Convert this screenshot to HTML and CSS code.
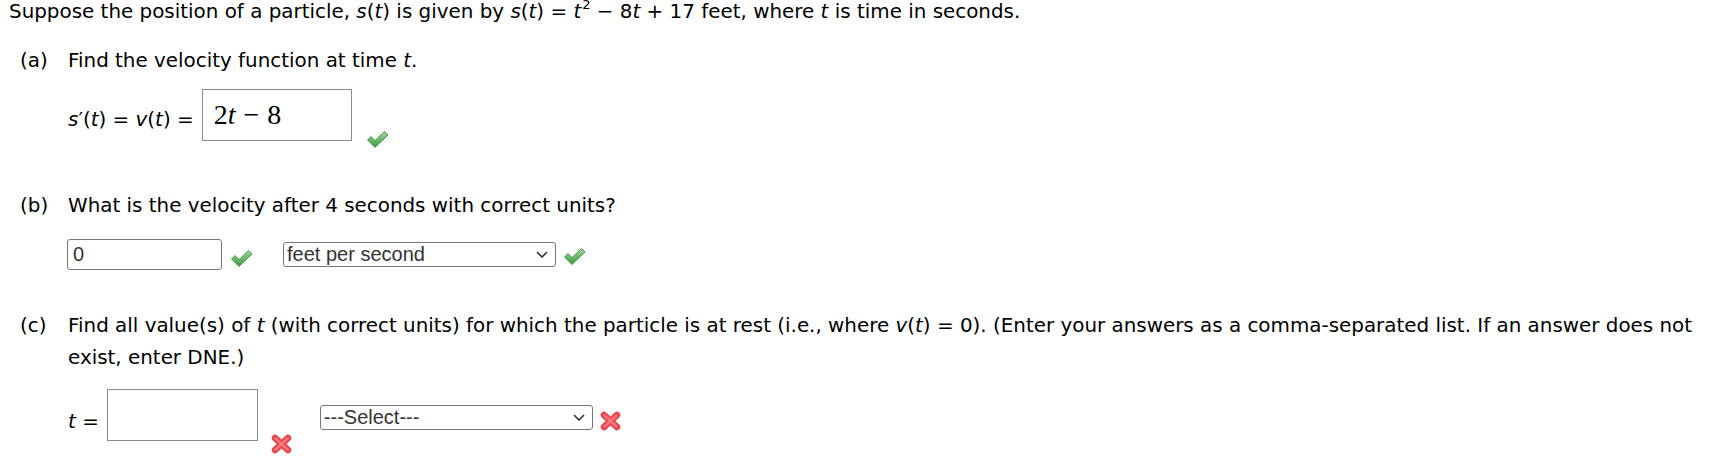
FILE: index.html
```html
<!DOCTYPE html>
<html lang="en">
<head>
<meta charset="utf-8">
<title>Particle velocity</title>
<link rel="stylesheet" href="styles.css">
</head>
<body>
<div class="question">
  <p class="intro">Suppose the position of a particle, <i>s</i>(<i>t</i>) is given by <i>s</i>(<i>t</i>) = <i>t</i><sup>2</sup> &minus; 8<i>t</i> + 17 feet, where <i>t</i> is time in seconds.</p>

  <div class="part part-a">
    <span class="label">(a)</span>
    <div class="body">
      <p class="prompt">Find the velocity function at time <i>t</i>.</p>
      <div class="row row-a">
        <span class="eq"><i>s</i>&prime;(<i>t</i>) = <i>v</i>(<i>t</i>) =</span>
        <span class="mathbox"><span class="math">2<i>t</i><span class="op">&minus;</span>8</span></span>
        <svg class="icon check check-a" viewBox="0 0 23 19" width="23" height="19" aria-label="correct">
          <defs>
            <linearGradient id="g1" x1="0" y1="0" x2="0" y2="1">
              <stop offset="0" stop-color="#9ad89a"/>
              <stop offset="1" stop-color="#3f9a3f"/>
            </linearGradient>
          </defs>
          <path d="M1.5 10 L5 6.5 L9 10.5 L18.5 1.5 L22 5 L9 17.5 Z" fill="url(#g1)" stroke="#4c9a4c" stroke-width="1" stroke-linejoin="round"/>
        </svg>
      </div>
    </div>
  </div>

  <div class="part part-b">
    <span class="label">(b)</span>
    <div class="body">
      <p class="prompt">What is the velocity after 4 seconds with correct units?</p>
      <div class="row row-b">
        <input class="field" type="text" value="0">
        <svg class="icon check check-b1" viewBox="0 0 23 19" width="23" height="19" aria-label="correct">
          <defs>
            <linearGradient id="g2" x1="0" y1="0" x2="0" y2="1">
              <stop offset="0" stop-color="#9ad89a"/>
              <stop offset="1" stop-color="#3f9a3f"/>
            </linearGradient>
          </defs>
          <path d="M1.5 10 L5 6.5 L9 10.5 L18.5 1.5 L22 5 L9 17.5 Z" fill="url(#g2)" stroke="#4c9a4c" stroke-width="1" stroke-linejoin="round"/>
        </svg>
        <span class="select-wrap units-b">
          <select class="units">
            <option>feet per second</option>
          </select>
          <svg class="chevron" viewBox="0 0 12 7" width="12" height="7" aria-hidden="true"><path d="M1 1 L6 6 L11 1" fill="none" stroke="#333" stroke-width="1.6"/></svg>
        </span>
        <svg class="icon check check-b2" viewBox="0 0 23 19" width="23" height="19" aria-label="correct">
          <defs>
            <linearGradient id="g3" x1="0" y1="0" x2="0" y2="1">
              <stop offset="0" stop-color="#9ad89a"/>
              <stop offset="1" stop-color="#3f9a3f"/>
            </linearGradient>
          </defs>
          <path d="M1.5 10 L5 6.5 L9 10.5 L18.5 1.5 L22 5 L9 17.5 Z" fill="url(#g3)" stroke="#4c9a4c" stroke-width="1" stroke-linejoin="round"/>
        </svg>
      </div>
    </div>
  </div>

  <div class="part part-c">
    <span class="label">(c)</span>
    <div class="body">
      <p class="prompt"><span>Find all value(s) of <i>t</i> (with correct units) for which the particle is at rest (i.e., where <i>v</i>(<i>t</i>) = 0).</span> <span>(Enter your answers as a comma-separated list.</span> <span>If an answer does not</span> <span>exist, enter DNE.)</span></p>
      <div class="row row-c">
        <span class="eq eq-c"><i>t</i> =</span>
        <span class="mathbox empty"></span>
        <svg class="icon cross cross-1" viewBox="0 0 21 20" width="21" height="20" aria-label="incorrect">
          <g stroke-linecap="round">
            <path d="M4 4 L17 16 M17 4 L4 16" stroke="#e9444e" stroke-width="6.5"/>
            <path d="M4.5 4.5 L16.5 15.5 M16.5 4.5 L4.5 15.5" stroke="#f7767c" stroke-width="2.5"/>
          </g>
        </svg>
        <span class="select-wrap units-c">
          <select class="units">
            <option>---Select---</option>
          </select>
          <svg class="chevron" viewBox="0 0 12 7" width="12" height="7" aria-hidden="true"><path d="M1 1 L6 6 L11 1" fill="none" stroke="#333" stroke-width="1.6"/></svg>
        </span>
        <svg class="icon cross cross-2" viewBox="0 0 21 20" width="21" height="20" aria-label="incorrect">
          <g stroke-linecap="round">
            <path d="M4 4 L17 16 M17 4 L4 16" stroke="#e9444e" stroke-width="6.5"/>
            <path d="M4.5 4.5 L16.5 15.5 M16.5 4.5 L4.5 15.5" stroke="#f7767c" stroke-width="2.5"/>
          </g>
        </svg>
      </div>
    </div>
  </div>
</div>
</body>
</html>
```

FILE: styles.css
```css
html, body {
  margin: 0;
  padding: 0;
  background: #ffffff;
}

body {
  font-family: "DejaVu Sans", Verdana, sans-serif;
  font-size: 19.9px;
  color: #000000;
}

.question {
  padding: 0 10px 0 9px;
}

p {
  margin: 0;
}

.intro {
  line-height: 24px;
}

.intro sup {
  font-size: 13px;
  line-height: 0;
  vertical-align: 9px;
  margin-left: 1px;
}

.part {
  display: grid;
  grid-template-columns: 59px 1fr;
  line-height: 32px;
}

.label {
  padding-left: 11px;
}

.part-a {
  margin-top: 21px;
}

.part-b {
  margin-top: 41px;
}

.part-c {
  margin-top: 40px;
}

.row {
  display: flex;
  align-items: flex-start;
  line-height: normal;
}

.row-a {
  margin-top: 12px;
}

.eq {
  align-self: center;
  white-space: nowrap;
}

.mathbox {
  box-sizing: border-box;
  display: flex;
  align-items: center;
  width: 150px;
  height: 52px;
  margin-left: 8px;
  padding-left: 11px;
  border: 1px solid #8c8c8c;
  background: #fff;
}

.math {
  font-family: "Liberation Serif", "DejaVu Serif", serif;
  font-size: 28px;
  white-space: nowrap;
}

.math .op {
  margin: 0 8px;
}

.icon {
  flex: none;
  display: block;
}

.check-a {
  margin-left: 14px;
  margin-top: 41px;
}

.row-b {
  margin-top: 17px;
  align-items: center;
}

.field {
  box-sizing: border-box;
  width: 155px;
  height: 31px;
  margin: 0 0 0 -1px;
  padding: 0 5px;
  border: 1px solid #767676;
  border-radius: 3px;
  font-family: "Liberation Sans", Arial, sans-serif;
  font-size: 20px;
  color: #333;
  background: #fff;
}

.check-b1 {
  margin-left: 8px;
  margin-top: 7px;
}

.select-wrap {
  position: relative;
  display: block;
  flex: none;
}

.units {
  display: block;
  box-sizing: border-box;
  width: 273px;
  height: 25px;
  margin: 0;
  padding: 0 0 0 3px;
  border: 1px solid #767676;
  border-radius: 3px;
  font-family: "Liberation Sans", Arial, sans-serif;
  font-size: 20px;
  line-height: 23px;
  color: #333;
  background-color: #fff;
  appearance: none;
  -webkit-appearance: none;
}

.chevron {
  position: absolute;
  right: 8px;
  top: 9px;
  pointer-events: none;
}

.units-b {
  margin-left: 30px;
}

.check-b2 {
  margin-left: 7px;
  margin-top: 4px;
}

.row-c {
  margin-top: 15px;
}

.eq-c {
  margin-right: -1px;
}

.mathbox.empty {
  width: 151px;
  margin-left: 9px;
}

.cross-1 {
  margin-left: 13px;
  margin-top: 45px;
}

.units-c {
  margin-left: 28px;
  margin-top: 16px;
}

.cross-2 {
  margin-left: 7px;
  margin-top: 22px;
}
```
